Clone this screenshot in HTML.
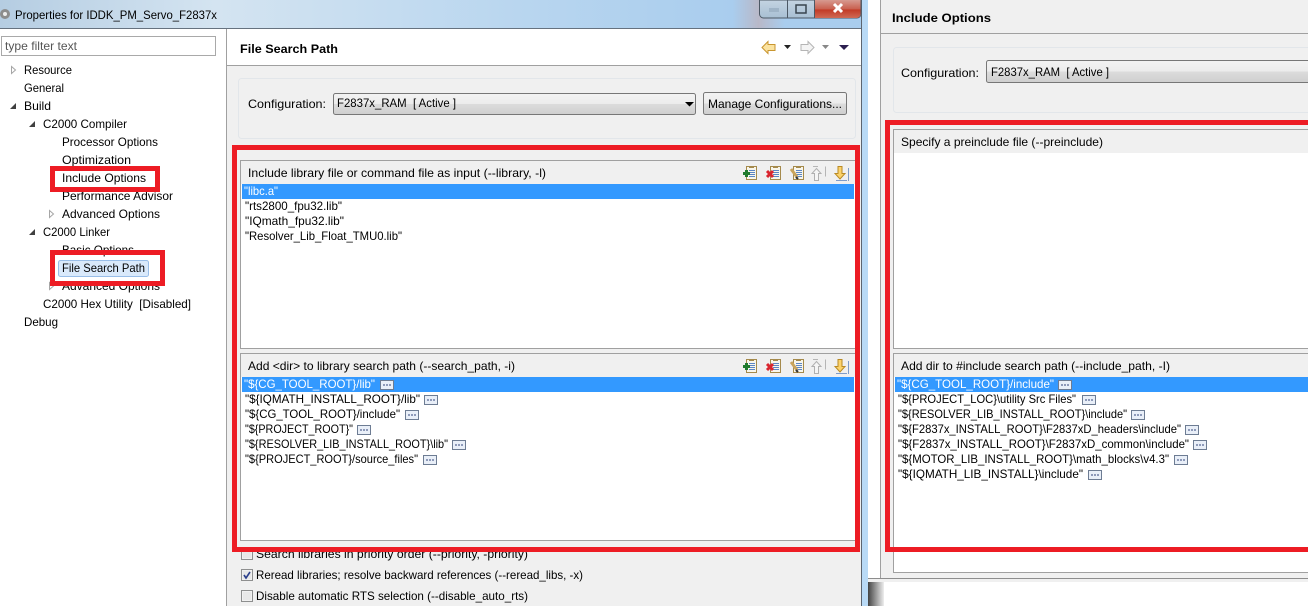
<!DOCTYPE html>
<html><head><meta charset="utf-8"><style>
html,body{margin:0;padding:0;background:#fff;overflow:hidden}
svg{display:block}
text{font-family:"Liberation Sans",sans-serif;font-size:12px;fill:#000;white-space:pre}
.b{font-weight:bold}
</style></head><body>
<svg xmlns="http://www.w3.org/2000/svg" width="1310" height="606" viewBox="0 0 1310 606">
<defs>
<linearGradient id="tb" x1="0" y1="0" x2="1" y2="0"><stop offset="0" stop-color="#b5cde2"/><stop offset=".25" stop-color="#d4e4f1"/><stop offset=".6" stop-color="#b9d6ef"/><stop offset=".85" stop-color="#a9cdee"/><stop offset=".88" stop-color="#b8b8c8"/><stop offset=".91" stop-color="#a9cdee"/><stop offset="1" stop-color="#a9cdee"/></linearGradient>
<linearGradient id="btn" x1="0" y1="0" x2="0" y2="1"><stop offset="0" stop-color="#f3f3f3"/><stop offset=".5" stop-color="#ececec"/><stop offset=".5" stop-color="#dcdcdc"/><stop offset="1" stop-color="#cfcfcf"/></linearGradient>
<linearGradient id="cl" x1="0" y1="0" x2="0" y2="1"><stop offset="0" stop-color="#d79a90"/><stop offset=".5" stop-color="#c9604f"/><stop offset=".55" stop-color="#c23a26"/><stop offset="1" stop-color="#cf6a55"/></linearGradient>
<linearGradient id="wb" x1="0" y1="0" x2="0" y2="1"><stop offset="0" stop-color="#c4d4e2"/><stop offset="1" stop-color="#a8bfd3"/></linearGradient>
<linearGradient id="sh" x1="0" y1="0" x2="1" y2="0"><stop offset="0" stop-color="#444"/><stop offset="1" stop-color="#eee"/></linearGradient>
<g id="doc"><path d="M4.500 1.500h10v13h-10z" fill="#f8f6ec" stroke="#a58a4c"/><path d="M7 1h5v2H7z" fill="#a58a4c"/><path d="M7 5.500h6M7 7.500h6M7 9.500h6M7 11.500h6" stroke="#5c86c4"/></g>
<g id="dots"><rect x=".5" y=".5" width="13" height="9" fill="#e9eff8" stroke="#6d7c93"/><path d="M3 5h2M6 5h2M9 5h2" stroke="#33457a"/></g>
<g id="ckb"><rect x=".5" y=".5" width="11" height="11" fill="#f1f1f1" stroke="#8e8f8f"/><rect x="2" y="2" width="8" height="8" fill="#e8e8e8"/></g>
<g id="tools">
<use href="#doc" x="0" y="0"/><path d="M1 8.500h7M4.500 5v7" stroke="#1f7a2e" stroke-width="3"/>
<use href="#doc" x="24" y="0"/><path d="M25 6l6 6M31 6l-6 6" stroke="#d9252f" stroke-width="3"/>
<use href="#doc" x="47" y="0"/><path d="M49 4l6 8" stroke="#c9a45c" stroke-width="3"/><path d="M54 12l2 2" stroke="#333" stroke-width="2"/>
<path d="M70 8.500l4.500-5 4.500 5h-2.500v7h-4v-7z" fill="#f5f5f5" stroke="#b0b0b0"/><path d="M71 1.500h5M83.500 1.500v10" stroke="#b5b5b5"/>
<path d="M93 8.500h3v-7h4v7h3l-5 5.500z" fill="#fcd36b" stroke="#b98a24"/><path d="M94 15.500h11M106.500 3v13" stroke="#7f9cc8"/>
</g>
</defs>

<!-- left window -->
<rect x="0" y="0" width="862" height="29" fill="url(#tb)"/>
<rect x="862" y="0" width="6" height="606" fill="#b9daf6"/>
<rect x="0" y="28" width="862" height="1" fill="#66727f"/>
<rect x="861" y="0" width="1" height="606" fill="#5c6570"/>
<rect x="0" y="29" width="227" height="577" fill="#fff"/>
<rect x="226" y="29" width="1" height="577" fill="#a0a0a0"/>
<rect x="227" y="29" width="634" height="577" fill="#f0f0f0"/>
<rect x="227" y="29" width="634" height="36" fill="#fff"/>
<rect x="227" y="65" width="634" height="1" fill="#a0a0a0"/>

<!-- title -->
<circle cx="5" cy="14" r="5" fill="#8d8d8d"/><circle cx="5" cy="14" r="2" fill="#eee"/>
<text x="15" y="19" textLength="202" lengthAdjust="spacingAndGlyphs">Properties for IDDK_PM_Servo_F2837x</text>

<!-- window buttons -->
<path d="M759.500 0v14a4 4 0 0 0 4 4h93.500a4 4 0 0 0 4-4V0z" fill="url(#wb)" stroke="#4c5865"/>
<path d="M815 0h45.500v14a4 4 0 0 1-4 4H815z" fill="url(#cl)"/>
<path d="M787.500 0v18M814.500 0v18" stroke="#4c5865"/>
<rect x="769" y="8" width="10" height="4" fill="#9fb4c7"/>
<rect x="796" y="5" width="10" height="8" fill="none" stroke="#38444f" stroke-width="1.500"/>
<path d="M834 4l8 8M842 4l-8 8" stroke="#fff" stroke-width="3"/>

<!-- filter -->
<rect x="1.500" y="36.500" width="214" height="19" fill="#fff" stroke="#a9a9a9"/>
<text x="5" y="50" textLength="72" lengthAdjust="spacingAndGlyphs" style="fill:#555">type filter text</text>

<!-- tree -->
<rect x="58.500" y="260.500" width="90" height="16" rx="2" fill="#d9e9fb" stroke="#98bde8"/>
<path d="M11.500 66.500v7l4-3.500z" fill="#fff" stroke="#a6a6a6"/>
<path d="M16 103v6h-6z" fill="#404040"/>
<path d="M35 121v6h-6z" fill="#404040"/>
<path d="M35 229v6h-6z" fill="#404040"/>
<path d="M49.500 210.500v7l4-3.500z" fill="#fff" stroke="#a6a6a6"/>
<path d="M49.500 282.500v7l4-3.500z" fill="#fff" stroke="#a6a6a6"/>
<text x="24" y="74" textLength="48" lengthAdjust="spacingAndGlyphs">Resource</text>
<text x="24" y="92" textLength="40" lengthAdjust="spacingAndGlyphs">General</text>
<text x="24" y="110" textLength="27" lengthAdjust="spacingAndGlyphs">Build</text>
<text x="43" y="128" textLength="84" lengthAdjust="spacingAndGlyphs">C2000 Compiler</text>
<text x="62" y="146" textLength="96" lengthAdjust="spacingAndGlyphs">Processor Options</text>
<text x="62" y="164" textLength="69" lengthAdjust="spacingAndGlyphs">Optimization</text>
<text x="62" y="182" textLength="84" lengthAdjust="spacingAndGlyphs">Include Options</text>
<text x="62" y="200" textLength="111" lengthAdjust="spacingAndGlyphs">Performance Advisor</text>
<text x="62" y="218" textLength="98" lengthAdjust="spacingAndGlyphs">Advanced Options</text>
<text x="43" y="236" textLength="67" lengthAdjust="spacingAndGlyphs">C2000 Linker</text>
<text x="62" y="254" textLength="72" lengthAdjust="spacingAndGlyphs">Basic Options</text>
<text x="62" y="272" textLength="83" lengthAdjust="spacingAndGlyphs">File Search Path</text>
<text x="62" y="290" textLength="98" lengthAdjust="spacingAndGlyphs">Advanced Options</text>
<text x="43" y="308" textLength="148" lengthAdjust="spacingAndGlyphs">C2000 Hex Utility  [Disabled]</text>
<text x="24" y="326" textLength="34" lengthAdjust="spacingAndGlyphs">Debug</text>

<!-- main header -->
<text x="240" y="53" class="b" textLength="98" lengthAdjust="spacingAndGlyphs">File Search Path</text>
<path d="M762 47.500l6-6v3h7v6h-7v3z" fill="#fbe3a0" stroke="#c9962f"/>
<path d="M784 45h7l-3.500 4z" fill="#222"/>
<path d="M814 47.500l-6-6v3h-7v6h7v3z" fill="#f4f4f4" stroke="#b5b5b5"/>
<path d="M822 45h7l-3.500 4z" fill="#888"/>
<path d="M839 45h10l-5 5z" fill="#2c1f50"/>

<!-- config -->
<rect x="238.500" y="78.500" width="617" height="60" rx="3" fill="#f0f0f0" stroke="#e2e6ea"/>
<text x="248" y="108" textLength="78" lengthAdjust="spacingAndGlyphs">Configuration:</text>
<rect x="333.500" y="93.500" width="362" height="21" rx="2" fill="url(#btn)" stroke="#777"/>
<text x="337" y="107" textLength="119" lengthAdjust="spacingAndGlyphs">F2837x_RAM  [ Active ]</text>
<path d="M685 102h9l-4.500 4.500z" fill="#000"/>
<rect x="703.500" y="92.500" width="143" height="22" rx="2" fill="url(#btn)" stroke="#777"/>
<text x="708" y="108" textLength="134" lengthAdjust="spacingAndGlyphs">Manage Configurations...</text>

<!-- lists left -->
<rect x="240.500" y="160.500" width="615" height="188" fill="#fff" stroke="#a0a0a0"/>
<rect x="241" y="161" width="614" height="23" fill="#f0f0f0"/>
<rect x="242" y="184" width="612" height="15" fill="#3399ff"/>
<text x="248" y="177" textLength="298" lengthAdjust="spacingAndGlyphs">Include library file or command file as input (--library, -l)</text>
<text x="244" y="195" textLength="34" lengthAdjust="spacingAndGlyphs" style="fill:#fff">"libc.a"</text>
<text x="245" y="210" textLength="97" lengthAdjust="spacingAndGlyphs">"rts2800_fpu32.lib"</text>
<text x="245" y="225" textLength="99" lengthAdjust="spacingAndGlyphs">"IQmath_fpu32.lib"</text>
<text x="245" y="240" textLength="157" lengthAdjust="spacingAndGlyphs">"Resolver_Lib_Float_TMU0.lib"</text>

<rect x="240.500" y="353.500" width="615" height="187" fill="#fff" stroke="#a0a0a0"/>
<rect x="241" y="354" width="614" height="23" fill="#f0f0f0"/>
<rect x="242" y="377" width="612" height="15" fill="#3399ff"/>
<text x="248" y="370" textLength="267" lengthAdjust="spacingAndGlyphs">Add &lt;dir&gt; to library search path (--search_path, -i)</text>
<text x="244" y="388" textLength="131" lengthAdjust="spacingAndGlyphs" style="fill:#fff">"${CG_TOOL_ROOT}/lib"</text>
<text x="245" y="403" textLength="175" lengthAdjust="spacingAndGlyphs">"${IQMATH_INSTALL_ROOT}/lib"</text>
<text x="245" y="418" textLength="155" lengthAdjust="spacingAndGlyphs">"${CG_TOOL_ROOT}/include"</text>
<text x="245" y="433" textLength="108" lengthAdjust="spacingAndGlyphs">"${PROJECT_ROOT}"</text>
<text x="245" y="448" textLength="203" lengthAdjust="spacingAndGlyphs">"${RESOLVER_LIB_INSTALL_ROOT}\lib"</text>
<text x="245" y="463" textLength="173" lengthAdjust="spacingAndGlyphs">"${PROJECT_ROOT}/source_files"</text>
<use href="#dots" x="380" y="380"/><use href="#dots" x="424" y="395"/><use href="#dots" x="405" y="410"/><use href="#dots" x="357" y="425"/><use href="#dots" x="452" y="440"/><use href="#dots" x="423" y="455"/>

<!-- toolbars -->
<use href="#tools" x="742" y="165"/>
<use href="#tools" x="742" y="358"/>

<!-- checkboxes -->
<use href="#ckb" x="241" y="548"/>
<text x="256" y="558" textLength="272" lengthAdjust="spacingAndGlyphs">Search libraries in priority order (--priority, -priority)</text>
<use href="#ckb" x="241" y="569"/><path d="M244 575l2 3 4-6" fill="none" stroke="#2b3f8c" stroke-width="1.600"/>
<text x="256" y="579" textLength="327" lengthAdjust="spacingAndGlyphs">Reread libraries; resolve backward references (--reread_libs, -x)</text>
<use href="#ckb" x="241" y="590"/>
<text x="256" y="600" textLength="272" lengthAdjust="spacingAndGlyphs">Disable automatic RTS selection (--disable_auto_rts)</text>

<!-- right window -->
<rect x="868" y="0" width="12" height="579" fill="#fff"/>
<rect x="880" y="0" width="1" height="579" fill="#a0a0a0"/>
<rect x="881" y="0" width="429" height="579" fill="#f0f0f0"/>
<rect x="881" y="33" width="429" height="1" fill="#a0a0a0"/>
<rect x="868" y="578" width="442" height="1" fill="#8d8d8d"/>
<rect x="868" y="579" width="442" height="3" fill="#f0f0f0"/>
<rect x="868" y="582" width="442" height="24" fill="#fff"/>
<rect x="868" y="582" width="16" height="24" fill="url(#sh)"/>
<text x="892" y="22" class="b" textLength="99" lengthAdjust="spacingAndGlyphs">Include Options</text>
<rect x="893.500" y="47.500" width="430" height="65" rx="3" fill="#f0f0f0" stroke="#e2e6ea"/>
<text x="901" y="77" textLength="78" lengthAdjust="spacingAndGlyphs">Configuration:</text>
<rect x="986.500" y="60.500" width="340" height="22" rx="2" fill="url(#btn)" stroke="#777"/>
<text x="991" y="76" textLength="118" lengthAdjust="spacingAndGlyphs">F2837x_RAM  [ Active ]</text>

<rect x="893.500" y="129.500" width="430" height="219" fill="#fff" stroke="#a0a0a0"/>
<rect x="894" y="130" width="416" height="23" fill="#f0f0f0"/>
<text x="901" y="146" textLength="202" lengthAdjust="spacingAndGlyphs">Specify a preinclude file (--preinclude)</text>

<rect x="893.500" y="353.500" width="430" height="219" fill="#fff" stroke="#a0a0a0"/>
<rect x="894" y="354" width="416" height="23" fill="#f0f0f0"/>
<rect x="895" y="377" width="415" height="15" fill="#3399ff"/>
<text x="901" y="370" textLength="269" lengthAdjust="spacingAndGlyphs">Add dir to #include search path (--include_path, -I)</text>
<text x="897" y="388" textLength="157" lengthAdjust="spacingAndGlyphs" style="fill:#fff">"${CG_TOOL_ROOT}/include"</text>
<text x="898" y="403" textLength="178" lengthAdjust="spacingAndGlyphs">"${PROJECT_LOC}\utility Src Files"</text>
<text x="898" y="418" textLength="229" lengthAdjust="spacingAndGlyphs">"${RESOLVER_LIB_INSTALL_ROOT}\include"</text>
<text x="898" y="433" textLength="283" lengthAdjust="spacingAndGlyphs">"${F2837x_INSTALL_ROOT}\F2837xD_headers\include"</text>
<text x="898" y="448" textLength="291" lengthAdjust="spacingAndGlyphs">"${F2837x_INSTALL_ROOT}\F2837xD_common\include"</text>
<text x="898" y="463" textLength="271" lengthAdjust="spacingAndGlyphs">"${MOTOR_LIB_INSTALL_ROOT}\math_blocks\v4.3"</text>
<text x="898" y="478" textLength="185" lengthAdjust="spacingAndGlyphs">"${IQMATH_LIB_INSTALL}\include"</text>
<use href="#dots" x="1058" y="380"/><use href="#dots" x="1082" y="395"/><use href="#dots" x="1131" y="410"/><use href="#dots" x="1185" y="425"/><use href="#dots" x="1193" y="440"/><use href="#dots" x="1174" y="455"/><use href="#dots" x="1088" y="470"/>

<!-- red annotations -->
<g fill="none" stroke="#ed1c24" stroke-width="5">
<rect x="52.500" y="168.500" width="105" height="21"/>
<rect x="52.500" y="252.500" width="110" height="31"/>
<rect x="234.500" y="147.500" width="623" height="402"/>
<rect x="887.500" y="122.500" width="430" height="427"/>
</g>
<!-- screenshot's white right edge -->
<rect x="1308" y="0" width="2" height="606" fill="#fff"/>
</svg>
</body></html>
